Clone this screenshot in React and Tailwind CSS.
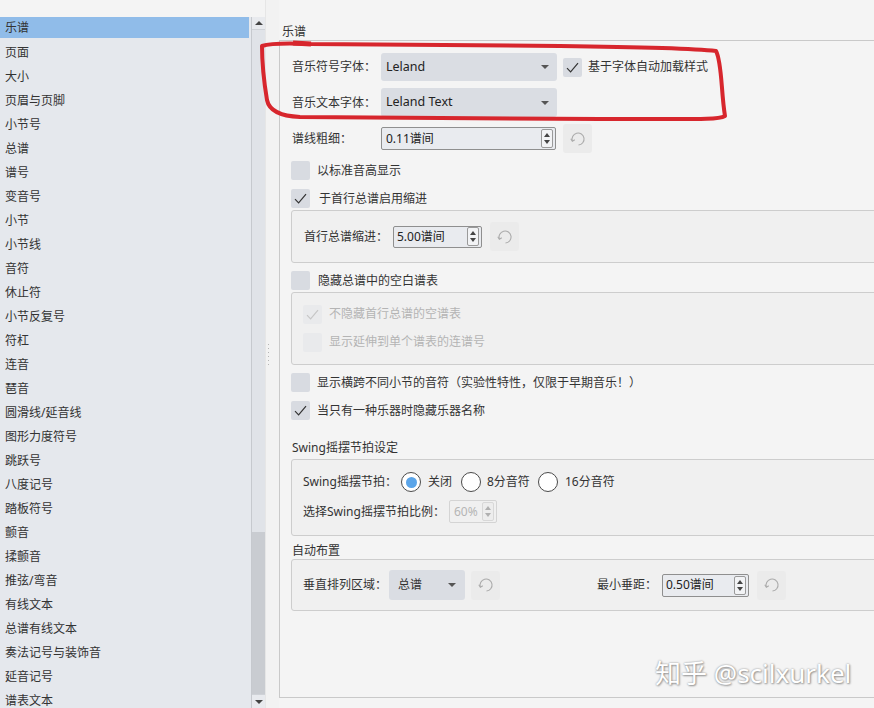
import React from "react";

const items = [
  "乐谱","页面","大小","页眉与页脚","小节号","总谱","谱号","变音号","小节","小节线",
  "音符","休止符","小节反复号","符杠","连音","琶音","圆滑线/延音线","图形力度符号","跳跃号","八度记号",
  "踏板符号","颤音","揉颤音","推弦/弯音","有线文本","总谱有线文本","奏法记号与装饰音","延音记号","谱表文本"
];

function Check({ checked, disabled }) {
  return (
    <div className={disabled ? "w-[19px] h-[19px] shrink-0 rounded-[2px] bg-[#e9eaec] flex items-center justify-center" : "w-[19px] h-[19px] shrink-0 rounded-[2px] bg-[#d8dbe1] flex items-center justify-center"}>
      {checked && (
        <svg width="15" height="15" viewBox="0 0 15 15">
          <path d="M2 8.2 L5.6 11.8 L13 3.2" fill="none" stroke={disabled ? "#c6c6c6" : "#333"} strokeWidth="1.2" />
        </svg>
      )}
    </div>
  );
}

function Reset() {
  return (
    <div className="w-[29px] h-[29px] shrink-0 rounded-[3px] bg-[#ebebeb] flex items-center justify-center">
      <svg width="18" height="18" viewBox="0 0 18 18">
        <path d="M3.4 11 A6 6 0 1 1 9.5 15" fill="none" stroke="#ababab" strokeWidth="1.1" />
        <path d="M1.8 8.8 L3.4 11.3 L5.8 9.8" fill="none" stroke="#ababab" strokeWidth="1.1" />
      </svg>
    </div>
  );
}

function UpDown({ disabled }) {
  return (
    <div className={disabled ? "w-[12px] h-[19px] rounded-[2px] border border-[#d8d8d8] bg-[#ededed] flex flex-col items-center justify-center gap-[3px]" : "w-[12px] h-[19px] rounded-[2px] border border-[#9a9a9a] bg-[#f2f3f5] flex flex-col items-center justify-center gap-[3px]"}>
      <div className={disabled ? "w-0 h-0 border-l-[3px] border-r-[3px] border-b-[4px] border-l-transparent border-r-transparent border-b-[#b0b0b0]" : "w-0 h-0 border-l-[3px] border-r-[3px] border-b-[4px] border-l-transparent border-r-transparent border-b-[#444]"} />
      <div className={disabled ? "w-0 h-0 border-l-[3px] border-r-[3px] border-t-[4px] border-l-transparent border-r-transparent border-t-[#b0b0b0]" : "w-0 h-0 border-l-[3px] border-r-[3px] border-t-[4px] border-l-transparent border-r-transparent border-t-[#444]"} />
    </div>
  );
}

function Arrow() {
  return <div className="w-0 h-0 border-l-[4px] border-r-[4px] border-t-[4px] border-l-transparent border-r-transparent border-t-[#555]" />;
}

function Radio({ checked }) {
  return (
    <div className="w-[20px] h-[20px] shrink-0 rounded-full border border-[#4a4a4a] bg-white flex items-center justify-center">
      {checked && <div className="w-[11px] h-[11px] rounded-full bg-[#5ba5e9]" />}
    </div>
  );
}

export default function App() {
  return (
    <div
      className="relative w-[874px] h-[708px] overflow-hidden bg-[#f4f4f4] flex text-[12px] text-[#333]"
      style={{ fontFamily: '"Noto Sans", "Noto Sans CJK SC", sans-serif' }}
    >
      {/* left list */}
      <div className="w-[251px] shrink-0 pt-[17px] flex flex-col">
        <div className="flex-1 bg-[#e5e8ed] flex flex-col">
          {items.map((t, i) => (
            <div
              key={t}
              className={i === 0 ? "h-[21px] mb-[3px] shrink-0 bg-[#90bce9] flex items-center pl-[5px] mr-[2px]" : "h-[24px] shrink-0 flex items-center pl-[5px] whitespace-nowrap"}
            >
              {t}
            </div>
          ))}
        </div>
      </div>
      {/* scrollbar */}
      <div className="w-[14px] shrink-0 pt-[17px] flex flex-col">
        <div className="flex-1 flex flex-col border-l border-[#c6c9ce] bg-[#c9ccd1]">
          <div className="h-[13px] bg-[#e8eaee] border-b border-[#cfd2d7] flex items-center justify-center">
            <div className="w-0 h-0 border-l-[4px] border-r-[4px] border-b-[4px] border-l-transparent border-r-transparent border-b-[#444]" />
          </div>
          <div className="h-[502px] bg-[#e0e3e8]" />
          <div className="flex-1" />
          <div className="h-[14px] bg-[#e8eaee] border-t border-[#cfd2d7] flex items-center justify-center">
            <div className="w-0 h-0 border-l-[4px] border-r-[4px] border-t-[4px] border-l-transparent border-r-transparent border-t-[#444]" />
          </div>
        </div>
      </div>
      {/* splitter */}
      <div className="w-[14px] shrink-0 bg-[#f2f2f2] border-l border-[#e6e6e6] flex items-center pl-[2px]">
        <div className="flex flex-col gap-[3px]">
          {[0, 1, 2, 3, 4, 5].map((k) => (
            <div key={k} className="w-[1px] h-[1px] bg-[#b5b5b5]" />
          ))}
        </div>
      </div>
      {/* right panel */}
      <div className="flex-1 pt-[24px] min-w-0">
        <div className="h-[16px] leading-[16px] pl-[3px]">乐谱</div>
        <div className="h-[658px] border-t border-l border-b border-[#c9c9c9] pl-[11px] pt-[12px] flex flex-col">
          {/* row 1 */}
          <div className="h-[28px] flex items-center">
            <div className="w-[90px] pl-[1px]">音乐符号字体：</div>
            <div className="w-[176px] h-[28px] rounded-[3px] bg-[#dadde3] flex items-center justify-between pl-[5px] pr-[8px] text-[12.5px] text-[#222]">
              <span>Leland</span>
              <Arrow />
            </div>
            <div className="ml-[6px]"><Check checked /></div>
            <div className="ml-[6px]">基于字体自动加载样式</div>
          </div>
          {/* row 2 */}
          <div className="mt-[7px] h-[29px] flex items-center">
            <div className="w-[90px] pl-[1px]">音乐文本字体：</div>
            <div className="w-[176px] h-[29px] rounded-[3px] bg-[#dadde3] flex items-center justify-between pl-[5px] pr-[8px] text-[12.5px] text-[#222]">
              <span>Leland Text</span>
              <Arrow />
            </div>
          </div>
          {/* row 3 */}
          <div className="mt-[7px] h-[29px] flex items-center">
            <div className="w-[90px] pl-[1px]">谱线粗细：</div>
            <div className="w-[175px] h-[23px] rounded-[2px] border border-[#8f8f8f] bg-[#e9ebef] flex items-center justify-between pl-[4px] pr-[2px] text-[#222]">
              <span>0.11谱间</span>
              <UpDown />
            </div>
            <div className="ml-[7px]"><Reset /></div>
          </div>
          {/* row 4 */}
          <div className="mt-[8px] h-[19px] flex items-center">
            <Check />
            <div className="ml-[7px]">以标准音高显示</div>
          </div>
          {/* row 5 */}
          <div className="mt-[9px] h-[19px] flex items-center">
            <Check checked />
            <div className="ml-[9px]">于首行总谱启用缩进</div>
          </div>
          {/* box 1 */}
          <div className="mt-[2px] -mr-[10px] h-[53px] rounded-[3px] border border-[#cdcdcd] bg-[#f0f0f0] flex items-center pl-[12px]">
            <div className="w-[89px] whitespace-nowrap">首行总谱缩进：</div>
            <div className="w-[89px] h-[22px] rounded-[2px] border border-[#8f8f8f] bg-[#e9ebef] flex items-center justify-between pl-[3px] pr-[2px] text-[#222]">
              <span>5.00谱间</span>
              <UpDown />
            </div>
            <div className="ml-[8px]"><Reset /></div>
          </div>
          {/* row 6 */}
          <div className="mt-[8px] h-[19px] flex items-center">
            <Check />
            <div className="ml-[8px]">隐藏总谱中的空白谱表</div>
          </div>
          {/* box 2 */}
          <div className="mt-[2px] -mr-[10px] h-[73px] rounded-[3px] border border-[#cdcdcd] bg-[#f0f0f0] pl-[11px] pt-[12px] flex flex-col text-[#b4b4b4]">
            <div className="h-[18px] flex items-center">
              <Check checked disabled />
              <div className="ml-[7px]">不隐藏首行总谱的空谱表</div>
            </div>
            <div className="mt-[10px] h-[18px] flex items-center">
              <Check disabled />
              <div className="ml-[7px]">显示延伸到单个谱表的连谱号</div>
            </div>
          </div>
          {/* row 7 */}
          <div className="mt-[8px] h-[19px] flex items-center">
            <Check />
            <div className="ml-[7px]">显示横跨不同小节的音符（实验性特性，仅限于早期音乐！）</div>
          </div>
          {/* row 8 */}
          <div className="mt-[9px] h-[19px] flex items-center">
            <Check checked />
            <div className="ml-[7px]">当只有一种乐器时隐藏乐器名称</div>
          </div>
          {/* swing */}
          <div className="mt-[20px] h-[16px] leading-[16px] pl-[1px]">Swing摇摆节拍设定</div>
          <div className="mt-[3px] -mr-[10px] h-[77px] rounded-[3px] border border-[#cdcdcd] bg-[#f0f0f0] pl-[11px] pt-[12px] flex flex-col">
            <div className="h-[20px] flex items-center">
              <div className="w-[98px] whitespace-nowrap">Swing摇摆节拍：</div>
              <Radio checked />
              <div className="ml-[7px] w-[33px]">关闭</div>
              <Radio />
              <div className="ml-[6px] w-[51px]">8分音符</div>
              <Radio />
              <div className="ml-[7px]">16分音符</div>
            </div>
            <div className="mt-[8px] h-[23px] flex items-center">
              <div className="w-[146px] whitespace-nowrap">选择Swing摇摆节拍比例：</div>
              <div className="w-[48px] h-[23px] rounded-[2px] border border-[#d4d4d4] bg-[#f0f0f0] flex items-center justify-between pl-[4px] pr-[2px] text-[#b5b5b5]">
                <span>60%</span>
                <UpDown disabled />
              </div>
            </div>
          </div>
          {/* auto layout */}
          <div className="mt-[8px] h-[14px] leading-[14px] pl-[1px]">自动布置</div>
          <div className="mt-[1px] -mr-[10px] h-[52px] rounded-[3px] border border-[#cdcdcd] bg-[#f0f0f0] pl-[11px] flex items-center">
            <div className="w-[86px] shrink-0 whitespace-nowrap">垂直排列区域：</div>
            <div className="w-[76px] h-[30px] shrink-0 rounded-[3px] bg-[#dadde3] flex items-center justify-between pl-[9px] pr-[9px]">
              <span>总谱</span>
              <Arrow />
            </div>
            <div className="ml-[6px]"><Reset /></div>
            <div className="ml-[97px] w-[65px] shrink-0 whitespace-nowrap">最小垂距：</div>
            <div className="w-[87px] h-[23px] shrink-0 rounded-[2px] border border-[#8f8f8f] bg-[#e9ebef] flex items-center justify-between pl-[3px] pr-[2px] text-[#222]">
              <span>0.50谱间</span>
              <UpDown />
            </div>
            <div className="ml-[8px]"><Reset /></div>
          </div>
        </div>
      </div>

      {/* red annotation */}
      <svg className="absolute left-0 top-0 pointer-events-none" width="874" height="708" viewBox="0 0 874 708">
        <path
          d="M262 46 C268 44 285 43 310 44 L560 46 C640 47 690 48 716 51 C722 62 721 92 725 116 C718 120 700 119 600 119 L300 117 C278 116 269 110 267 100 C264 82 262 62 262 46 Z"
          fill="none"
          stroke="#d7262d"
          strokeWidth="4"
          strokeLinejoin="round"
        />
        <path d="M293 43 L311 44" stroke="#d7262d" strokeWidth="5" />
      </svg>

      {/* watermark */}
      <div
        className="absolute left-[655px] top-[658px] text-[26px] leading-[30px] text-white"
        style={{ textShadow: "0 0 2px #8a8a8a, 1px 1px 2px #9a9a9a" }}
      >
        知乎 @scilxurkel
      </div>
    </div>
  );
}
